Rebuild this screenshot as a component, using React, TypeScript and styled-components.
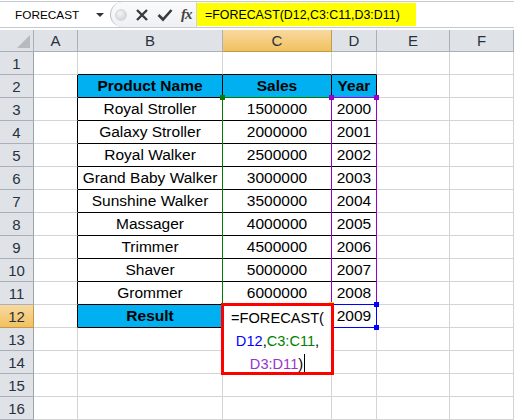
import React from "react";
import styled, { createGlobalStyle } from "styled-components";

const GlobalStyle = createGlobalStyle`
  html, body { margin: 0; padding: 0; background: #fff; }
  body { font-family: "Liberation Sans", Arial, sans-serif; overflow: hidden; }
`;

const GRID = "#d4d4d4";
const BLACK = "#000";
const CYAN = "#00b0f0";

const Page = styled.div`
  width: 514px;
  height: 420px;
  overflow: hidden;
  display: flex;
  flex-direction: column;
`;

const FormulaBar = styled.div`
  height: 28px;
  display: flex;
  align-items: stretch;
  border-top: 1px solid #c5c9cf;
  border-bottom: 1px solid #c5c9cf;
  box-sizing: border-box;
  margin-top: 1px;
  margin-bottom: 2px;
  background: #fff;
`;

const NameBox = styled.div`
  width: 110px;
  display: flex;
  align-items: center;
  justify-content: space-between;
  padding: 0 6px 0 15px;
  box-sizing: border-box;
  font-size: 11.8px;
  color: #000;
`;

const DropArrow = styled.span`
  width: 0;
  height: 0;
  border-left: 4px solid transparent;
  border-right: 4px solid transparent;
  border-top: 4px solid #333;
`;

const Buttons = styled.div`
  width: 86px;
  display: flex;
  align-items: center;
  gap: 8px;
  padding-left: 4px;
  box-sizing: border-box;
  border-left: 1px solid #b9bec5;
  border-top-left-radius: 14px;
  border-bottom-left-radius: 14px;
  background: linear-gradient(#fbfbfc, #eef0f3);
`;

const Dot = styled.span`
  width: 10px;
  height: 10px;
  border-radius: 50%;
  background: radial-gradient(circle at 40% 35%, #f4f4f4, #c9cccf);
  border: 1px solid #d6d8db;
`;

const Fx = styled.span`
  font-family: "Liberation Serif", "Times New Roman", serif;
  font-style: italic;
  font-weight: bold;
  font-size: 15px;
  color: #444;
  letter-spacing: -1px;
`;

const FormulaArea = styled.div`
  flex: 1;
  display: flex;
  align-items: stretch;
  padding: 1px 0;
  border-left: 1px solid #d0d4d9;
`;

const Highlight = styled.span`
  display: flex;
  align-items: center;
  background: #ffff00;
  padding: 0 16px 0 8px;
  font-size: 12.4px;
  color: #000;
`;

const Sheet = styled.div`
  position: relative;
  display: grid;
  grid-template-columns: 34px 44px 145px 109px 45px 73px 1fr;
  grid-template-rows: 22px repeat(16, 23px);
`;

const Corner = styled.div`
  grid-column: 1;
  grid-row: 1;
  position: relative;
  background: #dfe3e8;
  border-right: 1px solid #abb0b8;
  border-bottom: 1px solid #abb0b8;
  &::after {
    content: "";
    position: absolute;
    right: 3px;
    bottom: 3px;
    width: 0;
    height: 0;
    border-left: 13px solid transparent;
    border-bottom: 13px solid #b6bbc2;
  }
`;

const ColHead = styled.div<{ $col: number; $active?: boolean }>`
  grid-column: ${({ $col }) => $col};
  grid-row: 1;
  display: flex;
  align-items: center;
  justify-content: center;
  font-size: 15px;
  color: #27313f;
  background: ${({ $active }) =>
    $active ? "linear-gradient(#f9d99f, #f1c15f)" : "#dfe3e8"};
  border-right: 1px solid ${({ $active }) => ($active ? "#c29b4a" : "#abb0b8")};
  border-bottom: 1px solid ${({ $active }) => ($active ? "#c29b4a" : "#abb0b8")};
`;

const RowHead = styled.div<{ $row: number; $active?: boolean }>`
  grid-column: 1;
  grid-row: ${({ $row }) => $row};
  display: flex;
  align-items: center;
  justify-content: center;
  font-size: 15px;
  color: #27313f;
  background: ${({ $active }) =>
    $active ? "linear-gradient(#f9d99f, #f1c15f)" : "#dfe3e8"};
  border-right: 1px solid ${({ $active }) => ($active ? "#c29b4a" : "#9ea3aa")};
  border-bottom: 1px solid ${({ $active }) => ($active ? "#c29b4a" : "#abb0b8")};
`;

const Cell = styled.div<{
  $col: number;
  $row: number;
  $right: string;
  $bottom: string;
  $bg?: string;
  $bold?: boolean;
}>`
  grid-column: ${({ $col }) => $col};
  grid-row: ${({ $row }) => $row};
  display: flex;
  align-items: center;
  justify-content: center;
  overflow: hidden;
  white-space: nowrap;
  font-size: 15.5px;
  color: #000;
  font-weight: ${({ $bold }) => ($bold ? "bold" : "normal")};
  background: ${({ $bg }) => $bg || "#fff"};
  border-right: 1px solid ${({ $right }) => $right};
  border-bottom: 1px solid ${({ $bottom }) => $bottom};
`;

const Range = styled.div<{ $color: string; $cols: string; $rows: string }>`
  grid-column: ${({ $cols }) => $cols};
  grid-row: ${({ $rows }) => $rows};
  position: relative;
  z-index: 2;
  margin: -1px 0 0 -1px;
  border: 1px solid ${({ $color }) => $color};
  pointer-events: none;
`;

const Handle = styled.span<{ $color: string; $x: "l" | "r"; $y: "t" | "b" }>`
  position: absolute;
  width: 5px;
  height: 5px;
  background: ${({ $color }) => $color};
  ${({ $x }) => ($x === "l" ? "left: -3px;" : "right: -3px;")}
  ${({ $y }) => ($y === "t" ? "top: -3px;" : "bottom: -3px;")}
`;

const EditBox = styled.div`
  grid-column: 4;
  grid-row: 13 / 16;
  position: relative;
  z-index: 4;
  margin: -2px -2px -1px -2px;
  border: 3px solid #ff0000;
  background: #fff;
  display: flex;
  flex-direction: column;
  align-items: center;
  padding-top: 1px;
  font-size: 14.6px;
  line-height: 23px;
  color: #000;
`;

const Ref = styled.span<{ $color: string }>`
  color: ${({ $color }) => $color};
`;

const Caret = styled.span`
  display: inline-block;
  width: 1px;
  height: 18px;
  background: #000;
  vertical-align: -3px;
  margin-left: 1px;
`;

const COLS = ["A", "B", "C", "D", "E", "F"];

type CellData = { text: string; bold?: boolean; bg?: string };

const products: [string, string, string][] = [
  ["Royal Stroller", "1500000", "2000"],
  ["Galaxy Stroller", "2000000", "2001"],
  ["Royal Walker", "2500000", "2002"],
  ["Grand Baby Walker", "3000000", "2003"],
  ["Sunshine Walker", "3500000", "2004"],
  ["Massager", "4000000", "2005"],
  ["Trimmer", "4500000", "2006"],
  ["Shaver", "5000000", "2007"],
  ["Grommer", "6000000", "2008"],
];

const data: Record<string, CellData> = {
  B2: { text: "Product Name", bold: true, bg: CYAN },
  C2: { text: "Sales", bold: true, bg: CYAN },
  D2: { text: "Year", bold: true, bg: CYAN },
  B12: { text: "Result", bold: true, bg: CYAN },
  D12: { text: "2009" },
};
products.forEach(([name, sales, year], i) => {
  const r = i + 3;
  data[`B${r}`] = { text: name };
  data[`C${r}`] = { text: sales };
  data[`D${r}`] = { text: year };
});

// column index 0 = A; table spans B2:D12
const inTable = (c: number, r: number) => c >= 1 && c <= 3 && r >= 2 && r <= 12;

const Cross = () => (
  <svg width="14" height="14" viewBox="0 0 14 14">
    <path d="M2 2 L12 12 M12 2 L2 12" stroke="#3a3a3a" strokeWidth="2.4" />
  </svg>
);

const Tick = () => (
  <svg width="16" height="14" viewBox="0 0 16 14">
    <path d="M1.5 7 L6 11.5 L14.5 2" stroke="#3a3a3a" strokeWidth="2.6" fill="none" />
  </svg>
);

export default function App() {
  const cells: React.ReactNode[] = [];
  for (let r = 1; r <= 16; r++) {
    cells.push(
      <RowHead key={`h${r}`} $row={r + 1} $active={r === 12}>
        {r}
      </RowHead>
    );
    COLS.forEach((col, c) => {
      const id = `${col}${r}`;
      const d = data[id];
      const right = inTable(c, r) || inTable(c + 1, r) ? BLACK : GRID;
      const bottom = inTable(c, r) || inTable(c, r + 1) ? BLACK : GRID;
      cells.push(
        <Cell
          key={id}
          $col={c + 2}
          $row={r + 1}
          $right={right}
          $bottom={bottom}
          $bg={d?.bg}
          $bold={d?.bold}
        >
          {d?.text}
        </Cell>
      );
    });
  }

  return (
    <Page>
      <GlobalStyle />
      <FormulaBar>
        <NameBox>
          FORECAST
          <DropArrow />
        </NameBox>
        <Buttons>
          <Dot />
          <Cross />
          <Tick />
          <Fx>fx</Fx>
        </Buttons>
        <FormulaArea>
          <Highlight>=FORECAST(D12,C3:C11,D3:D11)</Highlight>
        </FormulaArea>
      </FormulaBar>
      <Sheet>
        <Corner />
        {COLS.map((c, i) => (
          <ColHead key={c} $col={i + 2} $active={c === "C"}>
            {c}
          </ColHead>
        ))}
        {cells}
        <Range $color="#007a00" $cols="4" $rows="4 / 13">
          <Handle $color="#007a00" $x="l" $y="t" />
          <Handle $color="#007a00" $x="r" $y="t" />
        </Range>
        <Range $color="#9900cc" $cols="5" $rows="4 / 13">
          <Handle $color="#9900cc" $x="l" $y="t" />
          <Handle $color="#9900cc" $x="r" $y="t" />
        </Range>
        <Range $color="#0000ff" $cols="5" $rows="13">
          <Handle $color="#ffd800" $x="l" $y="t" />
          <Handle $color="#0000ff" $x="r" $y="t" />
          <Handle $color="#ffd800" $x="l" $y="b" />
          <Handle $color="#0000ff" $x="r" $y="b" />
        </Range>
        <EditBox>
          <div>=FORECAST(</div>
          <div>
            <Ref $color="#0000ff">D12</Ref>,<Ref $color="#008000">C3:C11</Ref>,
          </div>
          <div>
            <Ref $color="#9933cc">D3:D11</Ref>)
            <Caret />
          </div>
        </EditBox>
      </Sheet>
    </Page>
  );
}
